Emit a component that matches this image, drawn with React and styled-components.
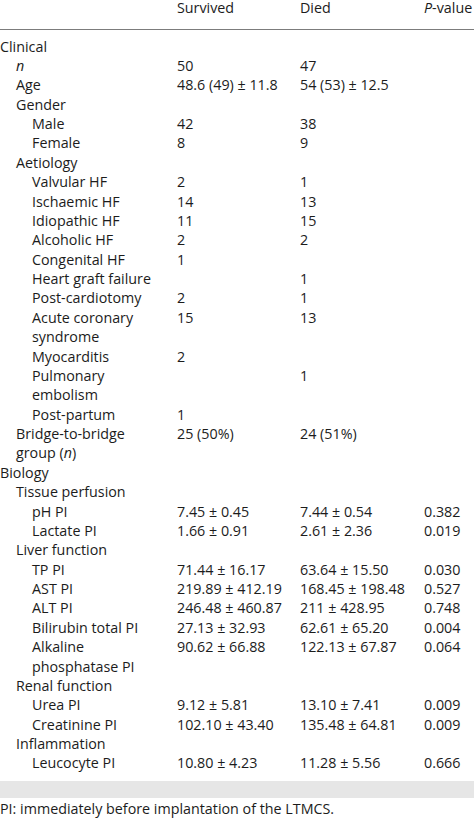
import React from "react";
import styled, { createGlobalStyle } from "styled-components";

const Global = createGlobalStyle`
  html, body { margin: 0; padding: 0; background: #ffffff; }
  body { overflow: hidden; }
`;

const Page = styled.div`
  width: 474px;
  height: 820px;
  overflow: hidden;
  font-family: "Open Sans", "Noto Sans", sans-serif;
  font-size: 14.3px;
  line-height: 19.37px;
  color: #1c1c1c;
`;

const Table = styled.div`
  display: flex;
  flex-direction: column;
`;

const Row = styled.div`
  display: grid;
  grid-template-columns: 177px 123px 124px 1fr;
  white-space: nowrap;
`;

const HeadRow = styled(Row)`
  line-height: 15px;
  padding-bottom: 14px;
  border-bottom: 1.5px solid #7c7c7c;
`;

const Body = styled.div`
  display: flex;
  flex-direction: column;
  padding-top: 6.5px;
`;

const Label = styled.div`
  padding-left: ${(p) => p.$level * 16}px;
`;

const Cell = styled.div``;

const Em = styled.span`
  font-style: italic;
`;

const Band = styled.div`
  margin-top: 8px;
  height: 17px;
  background: #e6e6e6;
`;

const Note = styled.div`
  margin-top: 1px;
`;

const rows = [
  { l: 0, t: ["Clinical"] },
  { l: 1, t: [<Em key="n">n</Em>], s: "50", d: "47" },
  { l: 1, t: ["Age"], s: "48.6 (49) ± 11.8", d: "54 (53) ± 12.5" },
  { l: 1, t: ["Gender"] },
  { l: 2, t: ["Male"], s: "42", d: "38" },
  { l: 2, t: ["Female"], s: "8", d: "9" },
  { l: 1, t: ["Aetiology"] },
  { l: 2, t: ["Valvular HF"], s: "2", d: "1" },
  { l: 2, t: ["Ischaemic HF"], s: "14", d: "13" },
  { l: 2, t: ["Idiopathic HF"], s: "11", d: "15" },
  { l: 2, t: ["Alcoholic HF"], s: "2", d: "2" },
  { l: 2, t: ["Congenital HF"], s: "1" },
  { l: 2, t: ["Heart graft failure"], d: "1" },
  { l: 2, t: ["Post-cardiotomy"], s: "2", d: "1" },
  { l: 2, t: ["Acute coronary", "syndrome"], s: "15", d: "13" },
  { l: 2, t: ["Myocarditis"], s: "2" },
  { l: 2, t: ["Pulmonary", "embolism"], d: "1" },
  { l: 2, t: ["Post-partum"], s: "1" },
  {
    l: 1,
    t: ["Bridge-to-bridge", <React.Fragment key="g">group (<Em>n</Em>)</React.Fragment>],
    s: "25 (50%)",
    d: "24 (51%)",
  },
  { l: 0, t: ["Biology"] },
  { l: 1, t: ["Tissue perfusion"] },
  { l: 2, t: ["pH PI"], s: "7.45 ± 0.45", d: "7.44 ± 0.54", p: "0.382" },
  { l: 2, t: ["Lactate PI"], s: "1.66 ± 0.91", d: "2.61 ± 2.36", p: "0.019" },
  { l: 1, t: ["Liver function"] },
  { l: 2, t: ["TP PI"], s: "71.44 ± 16.17", d: "63.64 ± 15.50", p: "0.030" },
  { l: 2, t: ["AST PI"], s: "219.89 ± 412.19", d: "168.45 ± 198.48", p: "0.527" },
  { l: 2, t: ["ALT PI"], s: "246.48 ± 460.87", d: "211 ± 428.95", p: "0.748" },
  { l: 2, t: ["Bilirubin total PI"], s: "27.13 ± 32.93", d: "62.61 ± 65.20", p: "0.004" },
  { l: 2, t: ["Alkaline", "phosphatase PI"], s: "90.62 ± 66.88", d: "122.13 ± 67.87", p: "0.064" },
  { l: 1, t: ["Renal function"] },
  { l: 2, t: ["Urea PI"], s: "9.12 ± 5.81", d: "13.10 ± 7.41", p: "0.009" },
  { l: 2, t: ["Creatinine PI"], s: "102.10 ± 43.40", d: "135.48 ± 64.81", p: "0.009" },
  { l: 1, t: ["Inflammation"] },
  { l: 2, t: ["Leucocyte PI"], s: "10.80 ± 4.23", d: "11.28 ± 5.56", p: "0.666" },
];

export default function App() {
  return (
    <Page>
      <Global />
      <Table>
        <HeadRow>
          <Cell />
          <Cell>Survived</Cell>
          <Cell>Died</Cell>
          <Cell>
            <Em>P</Em>-value
          </Cell>
        </HeadRow>
        <Body>
          {rows.map((r, i) => (
            <Row key={i}>
              <Label $level={r.l}>
                {r.t.map((line, j) => (
                  <div key={j}>{line}</div>
                ))}
              </Label>
              <Cell>{r.s}</Cell>
              <Cell>{r.d}</Cell>
              <Cell>{r.p}</Cell>
            </Row>
          ))}
        </Body>
      </Table>
      <Band />
      <Note>PI: immediately before implantation of the LTMCS.</Note>
    </Page>
  );
}
